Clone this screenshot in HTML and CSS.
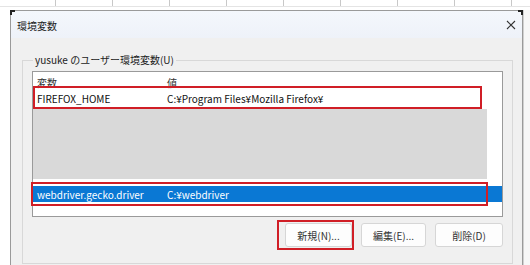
FILE: index.html
```html
<!DOCTYPE html>
<html lang="ja">
<head>
<meta charset="utf-8">
<link rel="stylesheet" href="styles.css">
</head>
<body>
<div class="page">
  <div class="strip">
    <span class="cell"></span><span class="cell"></span><span class="cell"></span><span class="cell"></span><span class="cell"></span><span class="cell"></span><span class="cell"></span><span class="cell"></span><span class="cell"></span><span class="cell last"></span>
  </div>
  <div class="main">
    <div class="dialog">
      <div class="titlebar">
        <span class="title">環境変数</span>
        <svg class="close" width="10" height="10" viewBox="0 0 10 10"><path d="M1 1 L9 9 M9 1 L1 9" stroke="#333" stroke-width="1.1" fill="none"/></svg>
      </div>
      <div class="body">
        <fieldset class="group">
          <legend>yusuke のユーザー環境変数(U)</legend>
          <div class="list">
            <div class="row head"><span class="c1">変数</span><span class="c2">値</span></div>
            <div class="row"><span class="c1">FIREFOX_HOME</span><span class="c2">C:¥Program Files¥Mozilla Firefox¥</span></div>
            <div class="redact"></div>
            <div class="row selected"><span class="c1">webdriver.gecko.driver</span><span class="c2">C:¥webdriver</span></div>
            <div class="mark mark1"></div>
            <div class="mark mark2"></div>
          </div>
          <div class="buttons">
            <button class="btn b1">新規(N)...</button>
            <button class="btn b2">編集(E)...</button>
            <button class="btn b3">削除(D)</button>
            <div class="mark mark3"></div>
          </div>
        </fieldset>
      </div>
    </div>
    <div class="side"></div>
  </div>
</div>
</body>
</html>
```
FILE: styles.css
```css
* { box-sizing: border-box; }
html, body { margin: 0; padding: 0; background: #ffffff; }
body { font-family: "Noto Sans CJK JP", "Noto Sans", sans-serif; font-size: 10px; color: #111; }
.page { width: 530px; height: 265px; overflow: hidden; }
.strip { height: 7px; display: flex; padding-left: 0; border-bottom: 1px solid #e4e4e4; }
.cell { width: 57px; flex: none; border-right: 1px solid #c8c8c8; }
.cell:first-child { width: 56px; }
.main { display: flex; margin-top: 3px; height: 258px; }
.dialog { margin-left: 10px; width: 513px; height: 258px; border: 1px solid #9a9a9a; border-bottom: none; background: #f0f0f0; position: relative; display: flex; flex-direction: column; }
.dialog::before { content: ""; position: absolute; left: -1px; top: -1px; width: 3px; height: 3px; border-left: 2px solid #222; border-top: 2px solid #222; }
.dialog::after { content: ""; position: absolute; right: -1px; top: -1px; width: 3px; height: 3px; border-right: 2px solid #222; border-top: 2px solid #222; }
.titlebar { height: 27px; background: linear-gradient(#f4f7fc, #eef2f9); display: flex; align-items: center; justify-content: space-between; padding: 1px 6px 0 6px; }
.title { font-size: 10px; color: #222; }
.body { flex: 1; padding: 16px 9px 0 11px; background: #f0f0f0; }
.group { margin: 0; border: 1px solid #d8d8d8; padding: 5px 9px 10px 9px; height: 210px; display: flex; flex-direction: column; }
.group legend { padding: 0 2px; margin-left: 1px; font-size: 10px; color: #222; line-height: 12px; }
.list { position: relative; height: 146px; background: #ffffff; border: 1px solid #9a9a9a; padding: 0; display: flex; flex-direction: column; }
.row { display: flex; height: 17px; align-items: center; white-space: nowrap; }
.row.head { height: 18px; padding-top: 2px; }
.row.head .c1, .row.head .c2 { color: #333; }
.c1 { width: 134px; padding-left: 4px; flex: none; }
.c2 { flex: 1; }
.redact { height: 70px; margin-top: 2px; width: 454px; background: #d9d9d9; }
.selected { margin-top: 7px; height: 16px; background: #0a78d4; color: #ffffff; }
.mark { position: absolute; border: 2px solid #d01e26; }
.mark1 { left: 0px; top: 14px; width: 449px; height: 23px; }
.mark2 { left: -2px; top: 110px; width: 457px; height: 24px; }
.buttons { position: relative; display: flex; justify-content: flex-end; gap: 9px; margin-top: 6px; }
.btn { font-family: inherit; font-size: 10px; color: #333; height: 24px; background: #fdfdfd; border: 1px solid #d6d6d6; border-radius: 3px; padding: 0; }
.b1 { width: 67px; }
.b2 { width: 65px; }
.b3 { width: 68px; }
.mark3 { right: 149px; top: -3px; width: 77px; height: 30px; }
.side { flex: 1; border-left: 1px solid #d0d0d0; margin-left: 0; background: #f7f7f7; }
```
